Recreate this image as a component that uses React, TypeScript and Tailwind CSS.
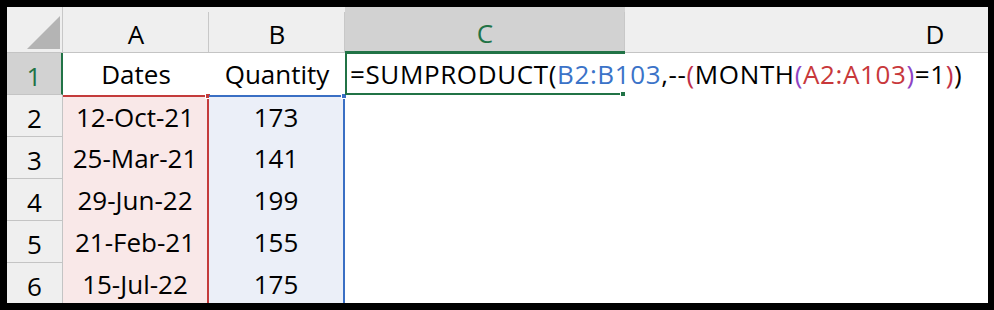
const font = { fontFamily: '"Open Sans", "Noto Sans", sans-serif' };

const rows = [
  ["12-Oct-21", "173"],
  ["25-Mar-21", "141"],
  ["29-Jun-22", "199"],
  ["21-Feb-21", "155"],
  ["15-Jul-22", "175"],
];

function ColHead({ label, active, last }: { label: string; active?: boolean; last?: boolean }) {
  return (
    <div
      className={`relative flex items-center justify-center pt-2 border-b ${
        active ? "bg-[#d2d2d2] text-[#217346] border-b-2 border-b-[#217346]" : "bg-[#efefef] text-black border-b-[#c4c4c4]"
      }`}
    >
      {label}
      {!last && <span className="absolute right-0 top-[5px] bottom-0 w-px bg-[#c8c8c8]" />}
    </div>
  );
}

function RowHead({ n, active }: { n: number; active?: boolean }) {
  return (
    <div
      className={`flex items-center justify-center pt-1 ${
        active
          ? "bg-[#d2d2d2] text-[#217346] border-r-2 border-r-[#217346] border-b border-b-[#c4c4c4]"
          : "bg-[#efefef] text-black border-r border-r-[#c4c4c4] border-b border-b-[#c4c4c4]"
      }`}
    >
      {n}
    </div>
  );
}

export default function App() {
  return (
    <div className="w-[994px] h-[310px] bg-black pt-[7px] pl-[7px] pr-[6px] pb-[7px]" style={font}>
      <div className="h-[296px] bg-white overflow-hidden text-[26px] leading-none text-black">
        <div className="w-[1238px] grid grid-cols-[56px_146px_136px_280px_620px] grid-rows-[46px_42px_42px_42px_42px_42px_42px]">
          {/* header row */}
          <div className="relative bg-[#efefef] border-b border-b-[#c4c4c4] border-r border-r-[#c8c8c8]">
            <svg className="absolute left-[20px] top-[9px]" width="34" height="34" viewBox="0 0 34 34">
              <polygon points="0,33 33,33 33,0" fill="#b4b4b4" />
            </svg>
          </div>
          <ColHead label="A" />
          <ColHead label="B" />
          <ColHead label="C" active />
          <ColHead label="D" last />

          {/* row 1 */}
          <RowHead n={1} active />
          <div className="flex items-center justify-center">Dates</div>
          <div className="flex items-center justify-center">Quantity</div>
          <div className="relative z-10 flex items-center pl-[3px] border-t-2 border-l-2 border-b-2 border-[#217346] -mt-px whitespace-nowrap overflow-visible tracking-[0.62px]">
            <span>=SUMPRODUCT(</span>
            <span className="text-[#3b73c8]">B2:B103</span>
            <span>,--</span>
            <span className="text-[#c0304a]">(</span>
            <span>MONTH</span>
            <span className="text-[#8e44c4]">(</span>
            <span className="text-[#c8383b]">A2:A103</span>
            <span className="text-[#8e44c4]">)</span>
            <span>=1</span>
            <span className="text-[#c0304a]">)</span>
            <span>)</span>
            <span className="absolute left-[273px] -bottom-[4px] w-[6px] h-[6px] bg-[#217346] border border-white" />
          </div>
          <div />

          {/* data rows */}
          {rows.map(([d, q], i) => (
            <div key={d} className="contents">
              <RowHead n={i + 2} />
              <div
                className={`relative flex items-center justify-center bg-[#f9e8e8] border-r-2 border-r-[#c43b3b] ${
                  i === 0 ? "border-t-2 border-t-[#c43b3b]" : ""
                }`}
              >
                {d}
                {i === 0 && (
                  <span className="absolute -right-[4px] -top-[4px] w-[6px] h-[6px] bg-[#c43b3b] border border-white" />
                )}
              </div>
              <div
                className={`relative flex items-center justify-center bg-[#ebeff8] border-r-2 border-r-[#3a6fc4] ${
                  i === 0 ? "border-t-2 border-t-[#3a6fc4]" : ""
                }`}
              >
                {q}
                {i === 0 && (
                  <span className="absolute -right-[4px] -top-[4px] w-[6px] h-[6px] bg-[#3a6fc4] border border-white" />
                )}
              </div>
              <div />
              <div />
            </div>
          ))}
        </div>
      </div>
    </div>
  );
}
